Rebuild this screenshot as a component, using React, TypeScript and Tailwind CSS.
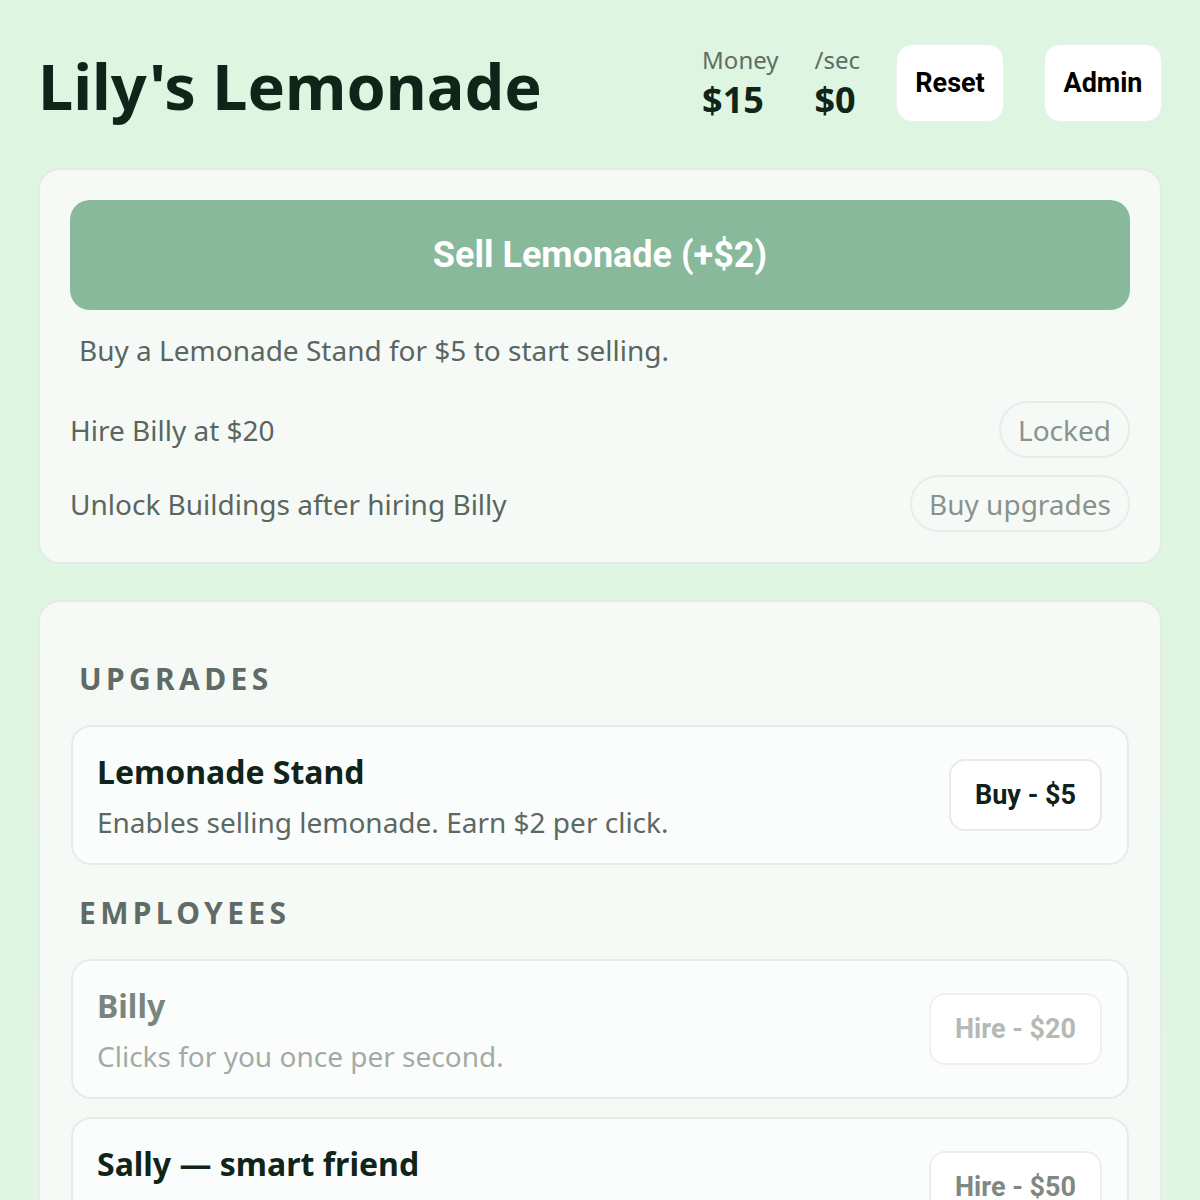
import React from "react";

const noto = { fontFamily: '"Noto Sans", "Open Sans", sans-serif' } as React.CSSProperties;

function Item({
  title,
  desc,
  btn,
  dim,
  btnDim,
}: {
  title: string;
  desc: string;
  btn: string;
  dim?: boolean;
  btnDim?: "strong" | "mid";
}) {
  return (
    <div className="flex items-center justify-between rounded-[20px] border-2 border-[#e6ede8] bg-[#fafdfb] pl-[24px] pr-[25px] h-[140px]">
      <div className={dim ? "flex flex-col opacity-55" : "flex flex-col"}>
        <div className="text-[32px] leading-[44px] font-bold text-[#10241a]">{title}</div>
        <div className="text-[28px] leading-[38px] mt-[9px] text-[#5d6862]">{desc}</div>
      </div>
      <button
        className={
          "font-['Roboto'] text-[27px] font-bold h-[72px] px-[24px] rounded-[16px] border-2 bg-white " +
          (btnDim === "strong"
            ? "border-[#eef2ef] bg-[#fbfdfc] text-[#b3bab6]"
            : btnDim === "mid"
            ? "border-[#eaefeb] bg-[#fbfdfc] text-[#7f8883]"
            : "border-[#e6ebe8] text-[#10201a]")
        }
      >
        {btn}
      </button>
    </div>
  );
}

export default function App() {
  return (
    <div
      className="min-h-[1200px] w-full bg-gradient-to-b from-[#ddf5e1] to-[#e1f6e4] px-[38px] pt-[44px] pb-[40px]"
      style={noto}
    >
      <header className="flex items-center justify-between h-[78px]">
        <h1 className="text-[63px] font-bold text-[#10241a] leading-none mt-[4px]">Lily's Lemonade</h1>
        <div className="flex items-center">
          <div className="flex gap-[36px] mr-[36px] mt-[4px]">
            <div className="flex flex-col">
              <span className="text-[24px] leading-[30px] text-[#5f6d64]">Money</span>
              <span className="text-[36px] leading-[50px] font-bold text-[#10241a]">$15</span>
            </div>
            <div className="flex flex-col">
              <span className="text-[24px] leading-[30px] text-[#5f6d64]">/sec</span>
              <span className="text-[36px] leading-[50px] font-bold text-[#10241a]">$0</span>
            </div>
          </div>
          <button className="font-['Roboto'] font-bold text-[27px] text-black bg-white rounded-[16px] w-[108px] h-[78px] border border-[#e7f2e9]">
            Reset
          </button>
          <button className="ml-[40px] font-['Roboto'] font-bold text-[27px] text-black bg-white rounded-[16px] w-[118px] h-[78px] border border-[#e7f2e9]">
            Admin
          </button>
        </div>
      </header>

      <section className="mt-[46px] rounded-[22px] border-2 border-[#e2ece4] bg-[#f6faf7] p-[30px] flex flex-col">
        <button className="h-[110px] w-full rounded-[20px] bg-[#88b99a] text-white font-['Roboto'] font-bold text-[36px]">
          Sell Lemonade (+$2)
        </button>
        <p className="ml-[9px] mt-[21px] text-[28px] leading-[38px] text-[#5a6660]">
          Buy a Lemonade Stand for $5 to start selling.
        </p>
        <div className="mt-[32px] flex flex-col gap-[17px]">
          <div className="flex items-center justify-between">
            <span className="text-[28px] text-[#5a6660]">Hire Billy at $20</span>
            <span className="h-[57px] px-[17px] flex items-center rounded-full border-2 border-[#e7ede9] text-[28px] text-[#89938d]">
              Locked
            </span>
          </div>
          <div className="flex items-center justify-between">
            <span className="text-[28px] text-[#5a6660]">Unlock Buildings after hiring Billy</span>
            <span className="h-[57px] px-[17px] flex items-center rounded-full border-2 border-[#e7ede9] text-[28px] text-[#89938d]">
              Buy upgrades
            </span>
          </div>
        </div>
      </section>

      <section className="mt-[36px] rounded-[22px] border-2 border-[#e2ece4] bg-[#f6faf7] px-[31px] pt-[57px] pb-[32px] flex flex-col">
        <h2 className="ml-[8px] text-[30px] leading-[40px] font-bold tracking-[0.145em] text-[#5f6b64]">UPGRADES</h2>
        <div className="mt-[26px]">
          <Item title="Lemonade Stand" desc="Enables selling lemonade. Earn $2 per click." btn="Buy - $5" />
        </div>
        <h2 className="ml-[8px] mt-[28px] text-[30px] leading-[40px] font-bold tracking-[0.145em] text-[#5f6b64]">EMPLOYEES</h2>
        <div className="mt-[26px] flex flex-col gap-[18px]">
          <Item title="Billy" desc="Clicks for you once per second." btn="Hire - $20" dim btnDim="strong" />
          <Item title="Sally — smart friend" desc="Answers questions for you." btn="Hire - $50" btnDim="mid" />
        </div>
      </section>
    </div>
  );
}
